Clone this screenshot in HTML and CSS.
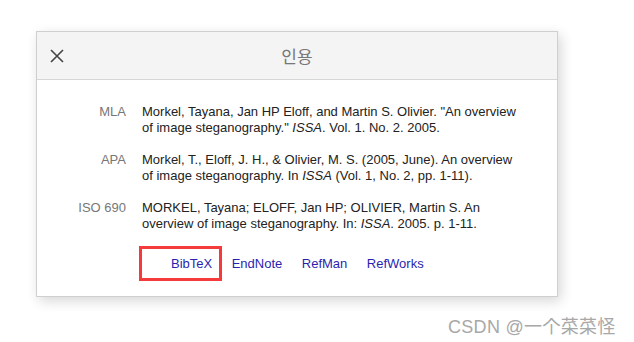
FILE: index.html
```html
<!DOCTYPE html>
<html lang="ko">
<head>
<meta charset="utf-8">
<title>인용</title>
<link rel="stylesheet" href="styles.css">
</head>
<body>
<div class="dialog">
  <div class="header">
    <button class="close" aria-label="닫기">
      <svg width="14" height="14" viewBox="0 0 14 14"><path d="M1 1L13 13M13 1L1 13" stroke="#444" stroke-width="1.6" fill="none"/></svg>
    </button>
    <div class="title">인용</div>
  </div>
  <div class="content">
    <div class="cites">
      <div class="label">MLA</div>
      <div class="text">Morkel, Tayana, Jan HP Eloff, and Martin S. Olivier. "An overview of image steganography." <i>ISSA</i>. Vol. 1. No. 2. 2005.</div>
      <div class="label">APA</div>
      <div class="text">Morkel, T., Eloff, J. H., &amp; Olivier, M. S. (2005, June). An overview of image steganography. In <i>ISSA</i> (Vol. 1, No. 2, pp. 1-11).</div>
      <div class="label">ISO 690</div>
      <div class="text">MORKEL, Tayana; ELOFF, Jan HP; OLIVIER, Martin S. An overview of image steganography. In: <i>ISSA</i>. 2005. p. 1-11.</div>
    </div>
    <div class="links">
      <a class="link marked" href="#">BibTeX<span class="mark"></span></a>
      <a class="link" href="#">EndNote</a>
      <a class="link" href="#">RefMan</a>
      <a class="link" href="#">RefWorks</a>
    </div>
  </div>
</div>
<div class="watermark">CSDN @一个菜菜怪</div>
</body>
</html>
```
FILE: styles.css
```css
html, body {
  margin: 0;
  padding: 0;
  background: #fff;
}
body {
  font-family: "Liberation Sans", Arial, sans-serif;
  position: relative;
  width: 634px;
  height: 342px;
  overflow: hidden;
}
.dialog {
  margin: 31px 0 0 36px;
  width: 520px;
  border: 1px solid #cfcfcf;
  background: #fff;
  box-shadow: 3px 4px 12px rgba(0, 0, 0, 0.16);
}
.header {
  position: relative;
  height: 47px;
  background: #f4f4f4;
  border-bottom: 1px solid #d6d6d6;
  display: flex;
  align-items: center;
  justify-content: center;
}
.close {
  position: absolute;
  left: 13px;
  top: 17px;
  width: 14px;
  height: 14px;
  padding: 0;
  border: 0;
  background: none;
  display: flex;
}
.title {
  font-family: "Noto Sans CJK KR", sans-serif;
  font-size: 17px;
  color: #777;
  line-height: 20px;
}
.content {
  padding: 24px 0 24px 0;
}
.cites {
  display: grid;
  grid-template-columns: 89px 380px;
  column-gap: 16px;
  row-gap: 16px;
  font-size: 13px;
  line-height: 16px;
}
.label {
  text-align: right;
  color: #777;
}
.text {
  color: #222;
}
.links {
  display: flex;
  gap: 20px;
  margin: 24px 0 0 134px;
  font-size: 13px;
  line-height: 16px;
}
.link {
  color: #2a1fb0;
  text-decoration: none;
}
.link + .link {
  margin-left: -0.5px;
}
.marked {
  position: relative;
}
.mark {
  position: absolute;
  left: -32px;
  top: -10px;
  width: 77px;
  height: 29px;
  border: 3px solid #f43a3a;
}
.watermark {
  position: absolute;
  left: 448px;
  top: 312px;
  font-family: "Liberation Sans", "Noto Sans CJK SC", sans-serif;
  font-size: 18px;
  letter-spacing: 0.3px;
  color: #a8a8a8;
  white-space: nowrap;
}
```
